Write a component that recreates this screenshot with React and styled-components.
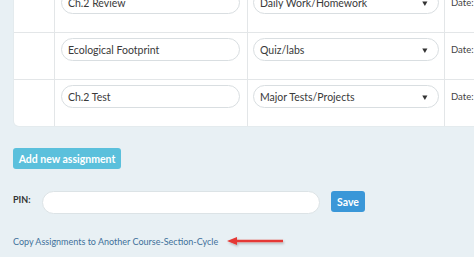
import React from "react";
import styled, { createGlobalStyle } from "styled-components";

const Global = createGlobalStyle`
  html, body { margin: 0; padding: 0; background: #ffffff; }
  body { font-family: Lato, "Open Sans", "Liberation Sans", sans-serif; }
  #root { width: 474px; height: 260px; overflow: hidden; }
`;

const Page = styled.div`
  height: 257px;
  background: #e8f0f4;
  overflow: hidden;
  display: flex;
  flex-direction: column;
  padding-left: 13px;
  box-sizing: border-box;
`;

const Card = styled.div`
  margin-top: -15px;
  margin-left: 1px;
  width: 520px;
  background: #ffffff;
  border-radius: 0 0 0 5px;
  display: grid;
  grid-template-columns: 40px 193px 197px 90px;
  box-shadow: 0 0 0 1px #e4ebee;
`;

const Cell = styled.div`
  height: 47px;
  box-sizing: border-box;
  border-left: ${(p) => (p.$first ? "none" : "1px solid #e3e6e8")};
  border-top: ${(p) => (p.$top ? "1px solid #e3e6e8" : "none")};
  padding: ${(p) => (p.$top ? "5px" : "6px")} 0 0 ${(p) => p.$pad || 6}px;
  display: flex;
  align-items: flex-start;
`;

const TextInput = styled.div`
  width: ${(p) => p.$w}px;
  height: 23px;
  box-sizing: border-box;
  border: 1px solid #d9dee1;
  border-radius: 12px;
  background: #fff;
  display: flex;
  align-items: center;
  padding: 0 ${(p) => p.$pr || 8}px 0 6px;
  font-size: 10.5px;
  color: #3a3a3a;
  justify-content: space-between;
`;

const Caret = styled.span`
  font-size: 8px;
  color: #333;
  transform: scaleX(1.1);
`;

const DateLabel = styled.span`
  font-size: 9.5px;
  color: #444;
  line-height: 23px;
  white-space: nowrap;
`;

const AddButton = styled.button`
  margin-top: 22px;
  align-self: flex-start;
  height: 21px;
  width: 108px;
  border: none;
  border-radius: 3px;
  background: #5bc0dc;
  color: #ffffff;
  font-family: inherit;
  font-weight: 700;
  font-size: 10.5px;
  padding: 0;
  cursor: pointer;
`;

const PinRow = styled.div`
  margin-top: 22px;
  display: flex;
  align-items: center;
  height: 23px;
`;

const PinLabel = styled.span`
  font-size: 9px;
  font-weight: 700;
  color: #333;
  width: 29px;
  align-self: flex-start;
  margin-top: 3px;
`;

const PinInput = styled.div`
  width: 278px;
  height: 23px;
  box-sizing: border-box;
  border: 1px solid #dce3e6;
  border-radius: 12px;
  background: #fff;
`;

const SaveButton = styled.button`
  margin-left: 11px;
  align-self: flex-start;
  height: 21px;
  width: 34px;
  border: none;
  border-radius: 3px;
  background: #3a97d8;
  color: #fff;
  font-family: inherit;
  font-weight: 700;
  font-size: 10.5px;
  padding: 0;
`;

const LinkRow = styled.div`
  margin-top: 20px;
  display: flex;
  align-items: center;
  height: 14px;
`;

const Link = styled.a`
  font-size: 9px;
  color: #41709b;
  text-decoration: none;
`;

const Arrow = styled.svg`
  margin-left: 9px;
  overflow: visible;
`;

const rows = [
  { title: "Ch.2 Review", cat: "Daily Work/Homework" },
  { title: "Ecological Footprint", cat: "Quiz/labs" },
  { title: "Ch.2 Test", cat: "Major Tests/Projects" },
];

export default function App() {
  return (
    <>
      <Global />
      <Page>
        <Card>
          {rows.map((r, i) => (
            <React.Fragment key={r.title}>
              <Cell $first $top={i > 0} />
              <Cell $top={i > 0}>
                <TextInput $w={179}>{r.title}</TextInput>
              </Cell>
              <Cell $top={i > 0} $pad={5}>
                <TextInput $w={186} $pr={9}>
                  {r.cat}
                  <Caret>▼</Caret>
                </TextInput>
              </Cell>
              <Cell $top={i > 0} $pad={6}>
                <DateLabel>Date:</DateLabel>
              </Cell>
            </React.Fragment>
          ))}
        </Card>
        <AddButton>Add new assignment</AddButton>
        <PinRow>
          <PinLabel>PIN:</PinLabel>
          <PinInput />
          <SaveButton>Save</SaveButton>
        </PinRow>
        <LinkRow>
          <Link href="#">Copy Assignments to Another Course-Section-Cycle</Link>
          <Arrow width="58" height="10" viewBox="0 0 58 10">
            <defs>
              <filter id="sh" x="-20%" y="-100%" width="140%" height="300%">
                <feDropShadow dx="1" dy="1.5" stdDeviation="1" floodColor="#000" floodOpacity="0.25" />
              </filter>
            </defs>
            <g filter="url(#sh)">
              <line x1="8" y1="5" x2="56" y2="5" stroke="#e53935" strokeWidth="2.6" />
              <polygon points="0,5 10,1 10,9" fill="#e53935" />
            </g>
          </Arrow>
        </LinkRow>
      </Page>
    </>
  );
}
